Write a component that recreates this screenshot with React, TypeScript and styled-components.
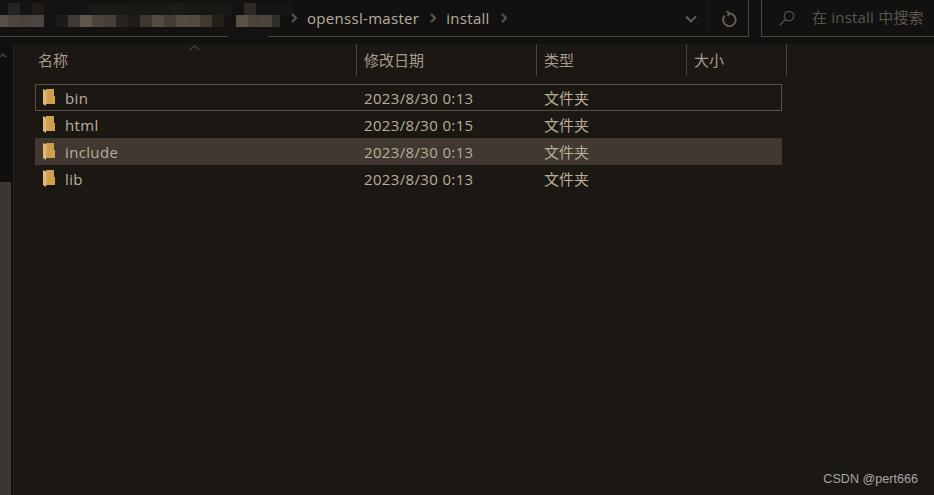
import React from "react";
import styled, { createGlobalStyle } from "styled-components";

const Global = createGlobalStyle`
  html, body { margin: 0; padding: 0; background: #1b1814; }
  body { font-family: "Open Sans", "Noto Sans CJK SC", sans-serif; }
`;

const Page = styled.div`
  position: relative;
  width: 934px;
  height: 495px;
  overflow: hidden;
  display: flex;
  flex-direction: column;
  background: #1b1814;
`;

const TopBar = styled.div`
  height: 44px;
  flex: none;
  box-sizing: border-box;
  padding-bottom: 7px;
  display: flex;
  gap: 12px;
  background: #121110;
`;

const AddressBox = styled.div`
  position: relative;
  width: 749px;
  flex: none;
  box-sizing: border-box;
  border-right: 1px solid #4b443c;
  border-bottom: 1px solid #4b443c;
  display: flex;
  align-items: center;
`;

const Mosaic = styled.div`
  width: 281px;
  height: 36px;
  flex: none;
  padding-top: 3px;
  box-sizing: border-box;
  background: #131211;
  display: flex;
  flex-direction: column;
  align-items: flex-start;
`;

const LineGap = styled.div`
  position: absolute;
  left: 228px;
  bottom: -1px;
  width: 40px;
  height: 1px;
  background: #131211;
`;

const MosaicRow = styled.div`
  display: flex;
  height: 12px;
`;

const MosaicCell = styled.div<{ $w: number; $c: string }>`
  width: ${(p) => p.$w}px;
  height: 12px;
  background: ${(p) => p.$c};
`;

const Crumbs = styled.div`
  display: flex;
  align-items: center;
  flex: 1;
  padding-left: 10px;
  margin-top: -1px;
  color: #b9ad9b;
  font-size: 15px;
  letter-spacing: 0.3px;
`;

const CrumbText = styled.span`
  margin: 0 11px 0 10px;
  white-space: nowrap;
`;

const AddressTools = styled.div`
  display: flex;
  align-items: center;
  height: 100%;
  flex: none;
`;

const DropButton = styled.div`
  width: 36px;
  height: 100%;
  display: flex;
  align-items: center;
  justify-content: center;
  padding-top: 1px;
  box-sizing: border-box;
  border-right: 1px solid #191715;
`;

const RefreshButton = styled.div`
  width: 39px;
  height: 100%;
  box-sizing: border-box;
  padding-left: 3px;
  display: flex;
  align-items: center;
  justify-content: center;
`;

const SearchBox = styled.div`
  flex: 1;
  box-sizing: border-box;
  border-left: 1px solid #4b443c;
  border-bottom: 1px solid #4b443c;
  display: flex;
  align-items: center;
  padding-left: 17px;
  gap: 17px;
  color: #5d554c;
  font-size: 15px;
  white-space: nowrap;
`;

const SearchText = styled.span`
  margin-top: -3px;
  letter-spacing: 0.2px;
`;

const Body = styled.div`
  flex: 1;
  display: flex;
  min-height: 0;
`;

const Sidebar = styled.div`
  width: 14px;
  flex: none;
  box-sizing: border-box;
  background: #100f0e;
  border-right: 1px solid #26231f;
  display: flex;
  flex-direction: column;
  padding-top: 9px;
`;

const ScrollArrow = styled.div`
  height: 129px;
  flex: none;
`;

const ScrollThumb = styled.div`
  width: 11px;
  flex: 1;
  background: #3d3630;
`;

const Main = styled.div`
  position: relative;
  flex: 1;
  padding-left: 21px;
`;

const HeaderRow = styled.div`
  display: flex;
  height: 32px;
  margin-bottom: 8px;
`;

const HeaderCell = styled.div<{ $w: number; $pad: number }>`
  width: ${(p) => p.$w}px;
  box-sizing: border-box;
  padding-left: ${(p) => p.$pad}px;
  border-right: 1px solid #48423b;
  color: #a79b8a;
  font-size: 15px;
  line-height: 32px;
`;

const SortCaret = styled.svg`
  position: absolute;
  left: 175px;
  top: 1px;
`;

const FileRow = styled.div<{ $selected?: boolean; $focused?: boolean }>`
  width: 747px;
  height: 27px;
  box-sizing: border-box;
  display: grid;
  grid-template-columns: 321px 180px 1fr;
  align-items: center;
  border: 1px solid ${(p) => (p.$focused ? "#5a5248" : "transparent")};
  background: ${(p) => (p.$selected ? "#403831" : "transparent")};
  color: #baad9b;
  font-size: 15px;
`;

const NameCell = styled.div`
  display: flex;
  align-items: center;
  padding-left: 7px;
  gap: 10px;
`;

const LatinText = styled.span`
  letter-spacing: 0.35px;
  white-space: nowrap;
`;

const Cell = styled.div`
  display: flex;
  padding-left: 7px;
  white-space: nowrap;
`;

const Watermark = styled.div`
  position: absolute;
  right: 16px;
  bottom: 9px;
  font-family: "Liberation Sans", sans-serif;
  font-size: 12.6px;
  color: #a9a6a2;
`;

const Folder = () => (
  <svg width="12" height="17" viewBox="0 0 12 17" style={{ flex: "none" }}>
    <path d="M3 0h8v7h1v8H3z" fill="#cf9f4e" />
    <path d="M0 0l3 1.5V17l-3-2z" fill="#e0b873" />
    <path d="M3 1.5V15h1V1.5z" fill="#d8ad62" />
  </svg>
);

const Chevron = () => (
  <svg width="6" height="10" viewBox="0 0 6 10" style={{ flex: "none" }}>
    <path d="M1 1l4 4-4 4" fill="none" stroke="#5f574e" strokeWidth="2" />
  </svg>
);

const top: [number, string][] = [
  [8, "#131211"], [12, "#262320"], [12, "#141312"], [12, "#1e1b18"], [44, "#141312"],
  [36, "#1b1916"], [48, "#1a1815"], [12, "#1e1b17"], [36, "#191714"], [12, "#1a1815"],
  [12, "#131211"], [12, "#2e2924"], [36, "#171513"],
];
const main: [number, string][] = [
  [8, "#57504a"], [12, "#4c443e"], [12, "#4a433c"], [12, "#4d453f"], [12, "#151312"],
  [12, "#1d1b18"], [12, "#423a35"], [12, "#5f564d"], [12, "#4c433c"], [12, "#473f3a"],
  [12, "#27241f"], [12, "#1f1c18"], [12, "#3c3731"], [12, "#544b40"], [12, "#443d35"],
  [12, "#544b41"], [12, "#534a40"], [12, "#423a31"], [12, "#231f1b"], [12, "#151312"],
  [12, "#5a5046"], [12, "#4a433b"], [12, "#4b443c"], [8, "#302c28"],
];

const files = [
  { name: "bin", date: "2023/8/30 0:13", focused: true },
  { name: "html", date: "2023/8/30 0:15" },
  { name: "include", date: "2023/8/30 0:13", selected: true },
  { name: "lib", date: "2023/8/30 0:13" },
];

export default function App() {
  return (
    <Page>
      <Global />
      <TopBar>
        <AddressBox>
          <Mosaic>
            <MosaicRow>
              {top.map(([w, c], i) => (
                <MosaicCell key={i} $w={w} $c={c} />
              ))}
            </MosaicRow>
            <MosaicRow>
              {main.map(([w, c], i) => (
                <MosaicCell key={i} $w={w} $c={c} />
              ))}
            </MosaicRow>
          </Mosaic>
          <LineGap />
          <Crumbs>
            <Chevron />
            <CrumbText>openssl-master</CrumbText>
            <Chevron />
            <CrumbText>install</CrumbText>
            <Chevron />
          </Crumbs>
          <AddressTools>
            <DropButton>
              <svg width="12" height="8" viewBox="0 0 12 8">
                <path d="M1 1.5l5 5 5-5" fill="none" stroke="#6a6157" strokeWidth="1.8" />
              </svg>
            </DropButton>
            <RefreshButton>
              <svg width="16" height="17" viewBox="0 0 16 17">
                <path d="M4.6 1.2l3 2.2-2 2.6M7.2 3.5a6.3 6.3 0 1 1-4.6 2.2" fill="none" stroke="#665d53" strokeWidth="2" />
              </svg>
            </RefreshButton>
          </AddressTools>
        </AddressBox>
        <SearchBox>
          <svg width="16" height="16" viewBox="0 0 16 16" style={{ flex: "none" }}>
            <circle cx="10" cy="6" r="4.7" fill="none" stroke="#5d554c" strokeWidth="1.2" />
            <path d="M6.6 9.4L1 15" stroke="#5d554c" strokeWidth="1.3" />
          </svg>
          <SearchText>在 install 中搜索</SearchText>
        </SearchBox>
      </TopBar>
      <Body>
        <Sidebar>
          <ScrollArrow>
            <svg width="7" height="5" viewBox="0 0 7 5" style={{ display: "block" }}>
              <path d="M0 4l3-3 3 3" fill="none" stroke="#4d463e" strokeWidth="1.4" />
            </svg>
          </ScrollArrow>
          <ScrollThumb />
        </Sidebar>
        <Main>
          <SortCaret width="11" height="6" viewBox="0 0 11 6">
            <path d="M0.5 5l5-4 5 4" fill="none" stroke="#5f574e" strokeWidth="1" />
          </SortCaret>
          <HeaderRow>
            <HeaderCell $w={322} $pad={3}>名称</HeaderCell>
            <HeaderCell $w={180} $pad={7}>修改日期</HeaderCell>
            <HeaderCell $w={150} $pad={7}>类型</HeaderCell>
            <HeaderCell $w={100} $pad={7}>大小</HeaderCell>
          </HeaderRow>
          {files.map((f) => (
            <FileRow key={f.name} $selected={f.selected} $focused={f.focused}>
              <NameCell>
                <Folder />
                <LatinText>{f.name}</LatinText>
              </NameCell>
              <Cell>
                <LatinText>{f.date}</LatinText>
              </Cell>
              <Cell>文件夹</Cell>
            </FileRow>
          ))}
          <Watermark>CSDN @pert666</Watermark>
        </Main>
      </Body>
    </Page>
  );
}
